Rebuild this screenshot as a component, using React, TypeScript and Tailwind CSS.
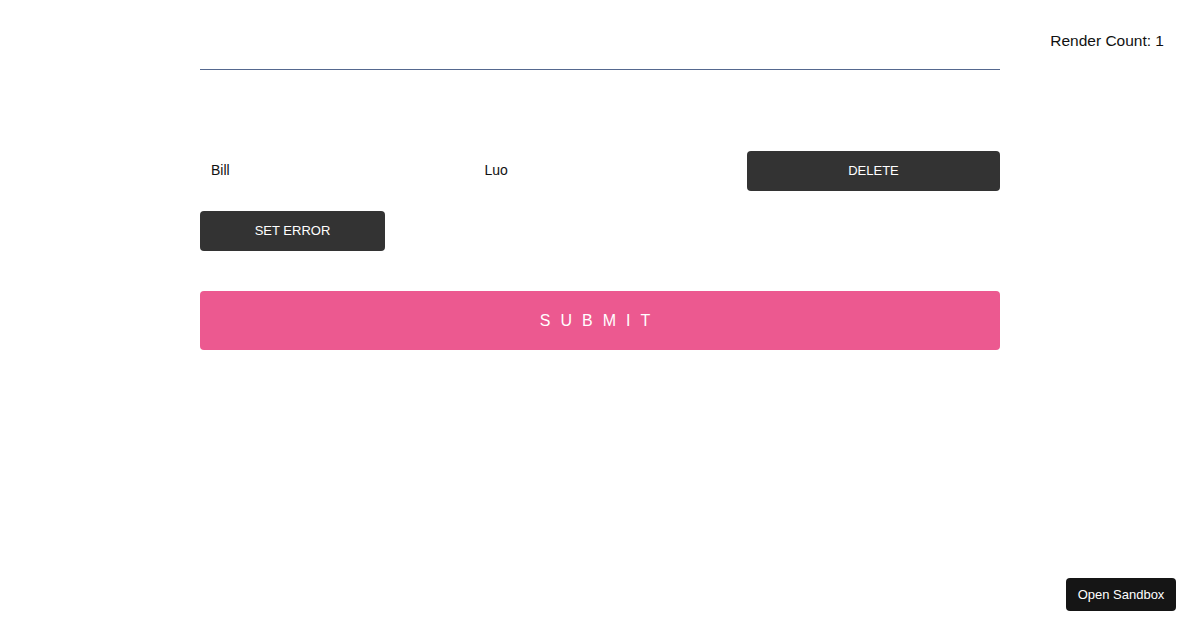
import React from 'react'

const App = () => {
  return (
    <div className="relative w-[1200px] h-[630px] bg-white font-['Liberation_Sans',Arial,sans-serif] text-[#111]">
      <p className="absolute top-[29px] right-[36px] text-[15.5px]">Render Count: 1</p>

      <div className="w-[800px] mx-auto pt-[69px]">
        <div className="h-px bg-[#55688f]"></div>

        <form className="pt-[81px]">
          <div className="grid grid-cols-3 gap-x-[20.5px] items-start">
            <input defaultValue="Bill" className="h-[38px] px-[11px] text-[14px] outline-none bg-transparent" />
            <input defaultValue="Luo" className="h-[38px] px-[11px] text-[14px] outline-none bg-transparent" />
            <button type="button" className="h-[40px] rounded bg-[#333333] text-white text-[13px]">DELETE</button>
          </div>

          <button type="button" className="mt-[20px] w-[185px] h-[40px] rounded bg-[#333333] text-white text-[13px]">SET ERROR</button>

          <button type="button" className="mt-[40px] w-full h-[59px] rounded bg-[#ec5990] text-white text-[16px] tracking-[10px]">SUBMIT</button>
        </form>
      </div>

      <button className="absolute right-[24px] bottom-[19px] w-[110px] h-[33px] rounded bg-[#151515] text-white text-[13px]">Open Sandbox</button>
    </div>
  )
}

export default App
